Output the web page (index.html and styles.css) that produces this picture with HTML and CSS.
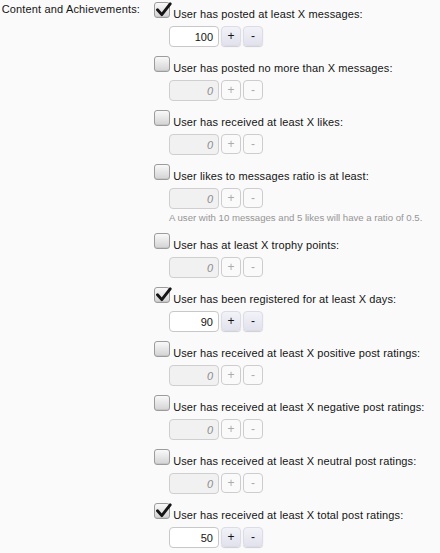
FILE: index.html
```html
<!DOCTYPE html>
<html>
<head>
<meta charset="utf-8">
<link rel="stylesheet" href="styles.css">
</head>
<body>
<dl class="ctrl">
  <dt class="ctrl-label">Content and Achievements:</dt>
  <dd class="ctrl-input">
    <ul class="opts">
      <li class="opt">
        <label class="opt-label"><span class="cb checked"><svg class="tick" viewBox="0 0 20 20" width="20" height="20"><path d="M3.5 7.8 L7.8 12.6 L16.2 1.8" fill="none" stroke="#151515" stroke-width="2.9" stroke-linecap="round" stroke-linejoin="round"/></svg></span> User has posted at least X messages:</label>
        <div class="spin"><span class="num">100</span><span class="btn">+</span><span class="btn">-</span></div>
      </li>
      <li class="opt">
        <label class="opt-label"><span class="cb"></span> User has posted no more than X messages:</label>
        <div class="spin off"><span class="num">0</span><span class="btn">+</span><span class="btn">-</span></div>
      </li>
      <li class="opt">
        <label class="opt-label"><span class="cb"></span> User has received at least X likes:</label>
        <div class="spin off"><span class="num">0</span><span class="btn">+</span><span class="btn">-</span></div>
      </li>
      <li class="opt">
        <label class="opt-label"><span class="cb"></span> User likes to messages ratio is at least:</label>
        <div class="spin off"><span class="num">0</span><span class="btn">+</span><span class="btn">-</span></div>
        <p class="hint">A user with 10 messages and 5 likes will have a ratio of 0.5.</p>
      </li>
      <li class="opt">
        <label class="opt-label"><span class="cb"></span> User has at least X trophy points:</label>
        <div class="spin off"><span class="num">0</span><span class="btn">+</span><span class="btn">-</span></div>
      </li>
      <li class="opt">
        <label class="opt-label"><span class="cb checked"><svg class="tick" viewBox="0 0 20 20" width="20" height="20"><path d="M3.5 7.8 L7.8 12.6 L16.2 1.8" fill="none" stroke="#151515" stroke-width="2.9" stroke-linecap="round" stroke-linejoin="round"/></svg></span> User has been registered for at least X days:</label>
        <div class="spin"><span class="num">90</span><span class="btn">+</span><span class="btn">-</span></div>
      </li>
      <li class="opt">
        <label class="opt-label"><span class="cb"></span> User has received at least X positive post ratings:</label>
        <div class="spin off"><span class="num">0</span><span class="btn">+</span><span class="btn">-</span></div>
      </li>
      <li class="opt">
        <label class="opt-label"><span class="cb"></span> User has received at least X negative post ratings:</label>
        <div class="spin off"><span class="num">0</span><span class="btn">+</span><span class="btn">-</span></div>
      </li>
      <li class="opt">
        <label class="opt-label"><span class="cb"></span> User has received at least X neutral post ratings:</label>
        <div class="spin off"><span class="num">0</span><span class="btn">+</span><span class="btn">-</span></div>
      </li>
      <li class="opt">
        <label class="opt-label"><span class="cb checked"><svg class="tick" viewBox="0 0 20 20" width="20" height="20"><path d="M3.5 7.8 L7.8 12.6 L16.2 1.8" fill="none" stroke="#151515" stroke-width="2.9" stroke-linecap="round" stroke-linejoin="round"/></svg></span> User has received at least X total post ratings:</label>
        <div class="spin"><span class="num">50</span><span class="btn">+</span><span class="btn">-</span></div>
      </li>
    </ul>
  </dd>
</dl>
</body>
</html>
```

FILE: styles.css
```css
html, body {
  margin: 0;
  padding: 0;
  background: #fafafa;
}
body {
  font-family: "Liberation Sans", Arial, sans-serif;
  font-size: 11px;
  color: #141414;
}
.ctrl {
  display: flex;
  margin: 0;
  padding: 0;
  column-gap: 14px;
}
.ctrl-label {
  width: 140px;
  flex: none;
  text-align: right;
  line-height: 16px;
  padding-top: 1px;
  letter-spacing: 0.15px;
  white-space: nowrap;
}
.ctrl-input {
  margin: 0;
  flex: 1;
}
.opts {
  list-style: none;
  margin: 0;
  padding: 2px 0 0 0;
}
.opt {
  margin-bottom: 9px;
}
.opt-label {
  display: block;
  height: 16px;
  line-height: 16px;
  white-space: nowrap;
  letter-spacing: 0.12px;
}
.cb {
  display: inline-block;
  position: relative;
  width: 14px;
  height: 14px;
  border: 1px solid #9c9c9c;
  border-radius: 3px;
  background: linear-gradient(#f9f9f9, #d3d3d3);
  box-shadow: inset 0 -1px 0 rgba(0,0,0,0.06);
  vertical-align: baseline;
  letter-spacing: 0;
}
.tick {
  display: block;
  position: absolute;
  left: -1px;
  top: -1px;
}
.spin {
  display: flex;
  gap: 2px;
  margin: 8px 0 0 15px;
  height: 21px;
}
.num {
  box-sizing: border-box;
  width: 50px;
  height: 21px;
  border: 1px solid #c8c8c8;
  border-radius: 4px;
  background: #fff;
  text-align: right;
  padding: 0 5px 0 0;
  line-height: 20px;
  font-size: 11px;
  color: #141414;
}
.btn {
  box-sizing: border-box;
  width: 20px;
  height: 20px;
  border: 1px solid #dcdce6;
  border-radius: 4px;
  background: linear-gradient(#f2f2f8, #e2e2ee);
  box-shadow: 0 1px 1px rgba(0,0,40,0.18);
  text-align: center;
  line-height: 18px;
  font-size: 12px;
  color: #111;
}
.spin.off .num {
  background: #f1f1f1;
  border-color: #cfcfcf;
  color: #8c8c8c;
  font-style: italic;
}
.spin.off .btn {
  background: #fafafa;
  border-color: #cdcdcd;
  box-shadow: none;
  color: #ababab;
}
.hint {
  margin: 3px 0 1px 15px;
  font-size: 9.6px;
  line-height: 12px;
  color: #959595;
  white-space: nowrap;
}
```
